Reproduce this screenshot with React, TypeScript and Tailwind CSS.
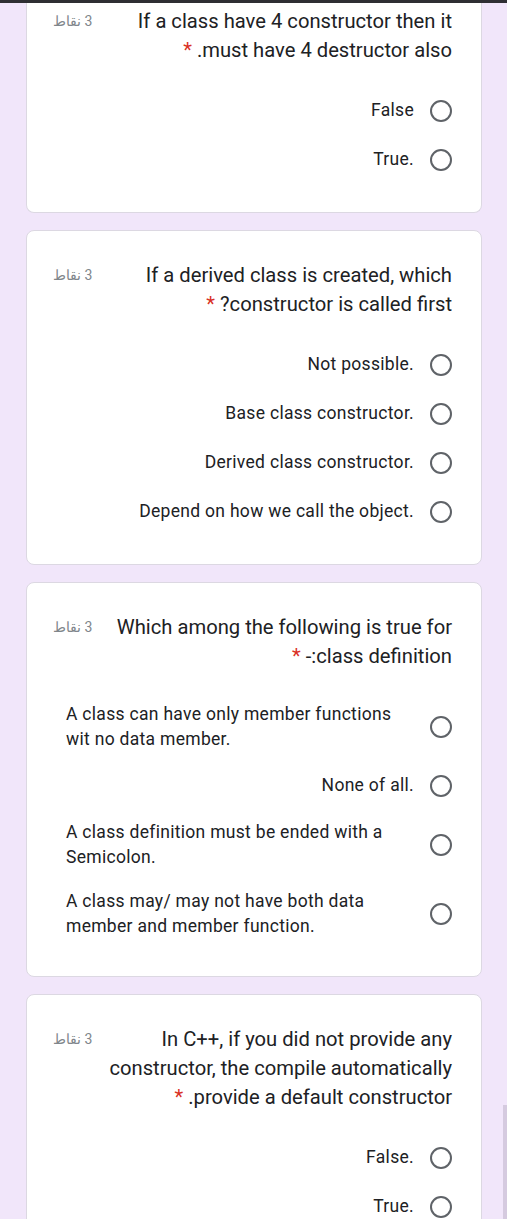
import React from "react";

const Radio = () => (
  <div className="w-[22px] h-[22px] shrink-0 rounded-full border-2 border-[#5f6368] bg-white" />
);

type Opt = { lines: string[] };

const Option = ({ lines }: Opt) => {
  const multi = lines.length > 1;
  return (
    <div
      className={
        "flex items-center justify-end gap-[16px] " +
        (multi ? "h-[69px]" : "h-[49px]")
      }
    >
      <div
        className={
          "text-[17.5px] leading-[24.5px] tracking-[0.3px] text-[#202124] " +
          (multi ? "flex-1 text-left" : "whitespace-nowrap")
        }
      >
        {lines.map((l, i) => (
          <div key={i}>{l}</div>
        ))}
      </div>
      <Radio />
    </div>
  );
};

type Q = {
  lines: string[];
  options: Opt[];
  first?: boolean;
};

const Card = ({ lines, options, first }: Q) => (
  <div
    className={
      "bg-white border-[#dcd8e2] pr-[29px] pl-[26px] pb-[28px] " +
      (first
        ? "border-x border-b rounded-b-[8px] pt-[4px]"
        : "border rounded-[8px] pt-[30px]")
    }
  >
    <div className="flex items-start gap-[14px]">
      <div
        dir="rtl"
        className="whitespace-nowrap text-[14px] leading-[29px] text-[#80868b]"
      >
        3 نقاط
      </div>
      <div className="flex-1 text-right text-[20.2px] leading-[29px] text-[#202124]">
        {lines.map((l, i) =>
          i === lines.length - 1 ? (
            <div key={i}>
              <span className="text-[#d93025]">*</span> {l}
            </div>
          ) : (
            <div key={i}>{l}</div>
          )
        )}
      </div>
    </div>
    <div className="mt-[21px] pl-[13px] flex flex-col">
      {options.map((o, i) => (
        <Option key={i} lines={o.lines} />
      ))}
    </div>
  </div>
);

export default function App() {
  const font = { fontFamily: "Roboto, 'Noto Sans', Arial, sans-serif" };
  return (
    <div
      className="relative w-[507px] h-[1219px] overflow-hidden bg-[#f1e6fa]"
      style={font}
    >
      <div className="h-[3px] bg-[#2f2f33]" />
      <div className="ml-[26px] mr-[25px] flex flex-col gap-[17px]">
        <Card
          first
          lines={["If a class have 4 constructor then it", ".must have 4 destructor also"]}
          options={[{ lines: ["False"] }, { lines: ["True."] }]}
        />
        <Card
          lines={["If a derived class is created, which", "?constructor is called first"]}
          options={[
            { lines: ["Not possible."] },
            { lines: ["Base class constructor."] },
            { lines: ["Derived class constructor."] },
            { lines: ["Depend on how we call the object."] },
          ]}
        />
        <Card
          lines={["Which among the following is true for", "-:class definition"]}
          options={[
            { lines: ["A class can have only member functions", "wit no data member."] },
            { lines: ["None of all."] },
            { lines: ["A class definition must be ended with a", "Semicolon."] },
            { lines: ["A class may/ may not have both data", "member and member function."] },
          ]}
        />
        <Card
          lines={[
            "In C++, if you did not provide any",
            "constructor, the compile automatically",
            ".provide a default constructor",
          ]}
          options={[{ lines: ["False."] }, { lines: ["True."] }]}
        />
      </div>
      <div className="absolute right-0 top-[1105px] w-[4px] h-[114px] bg-[#d5cadf]" />
    </div>
  );
}
